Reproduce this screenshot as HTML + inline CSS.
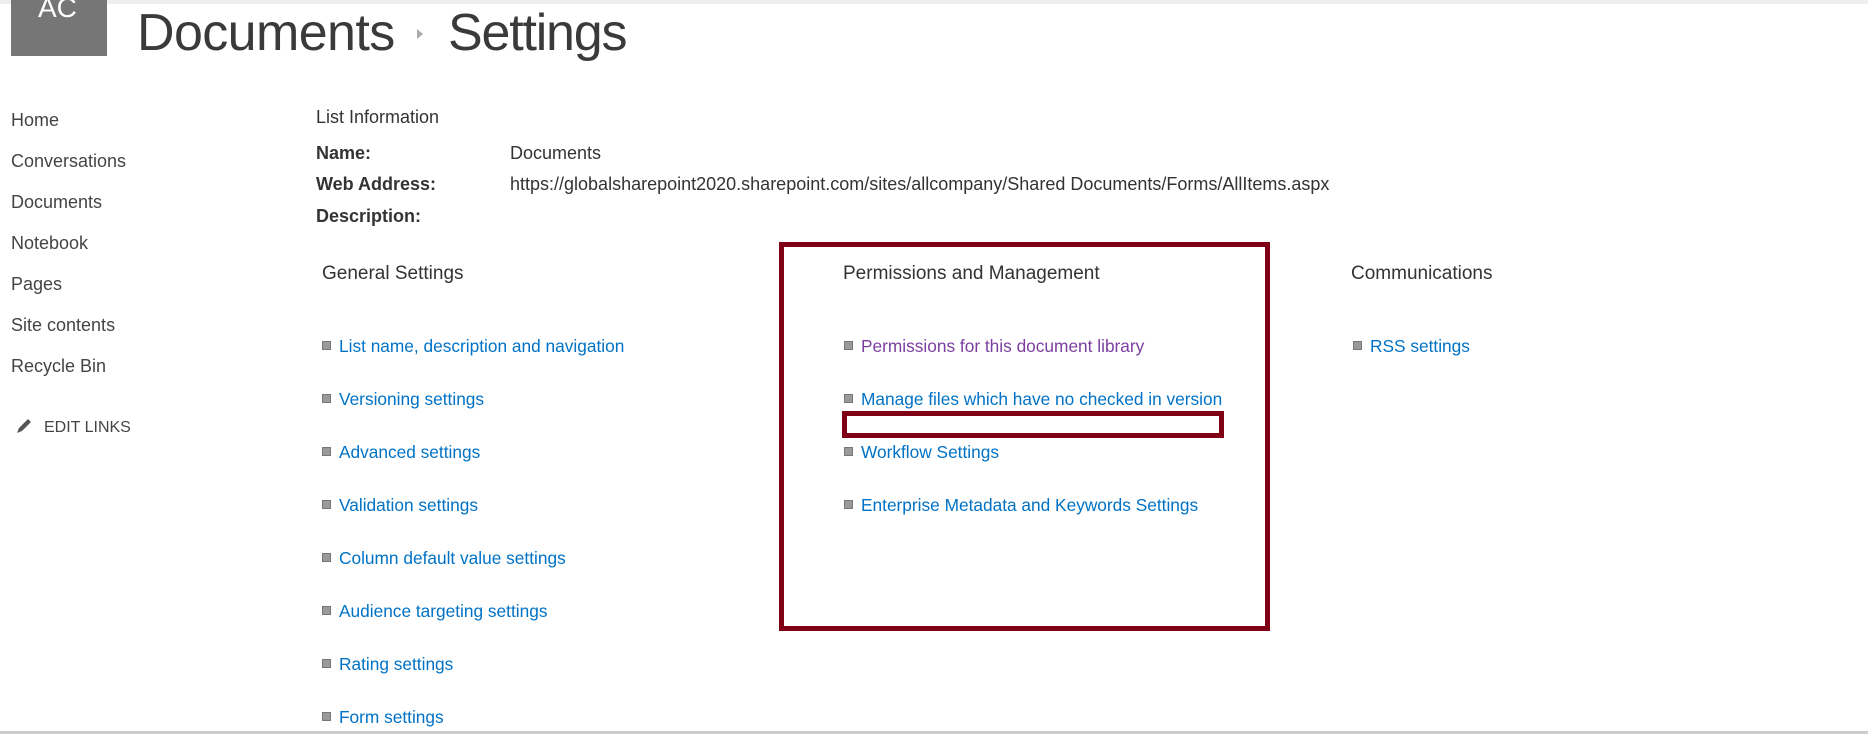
<!DOCTYPE html>
<html><head><style>
body{margin:0;width:1868px;height:734px;position:relative;background:#fff;font-family:"Liberation Sans",sans-serif;overflow:hidden}
.a{position:absolute;white-space:nowrap}
.nav{font-size:18px;color:#444;left:11px}
.lab{font-size:18px;color:#333;font-weight:bold;left:316px}
.val{font-size:18px;color:#333;left:510px}
.h{font-size:19px;color:#333}
.l{font-size:17.3px;color:#0072c6}
.b{position:absolute;width:7px;height:7px;background:#9a9a9a;border:1px solid #777}
</style></head><body>
<div class="a" style="left:0;top:0;width:1868px;height:4px;background:#eee"></div>
<div class="a" style="left:11px;top:0;width:96px;height:56px;background:#767676"></div>
<div class="a" style="left:38px;top:-8px;font-size:28px;color:#fff">AC</div>
<div class="a" style="left:137px;top:3px;font-size:52px;color:#3a3a3a;letter-spacing:-0.6px">Documents</div>
<div class="a" style="left:417px;top:29px;width:0;height:0;border-left:6px solid #aaa;border-top:5px solid transparent;border-bottom:5px solid transparent"></div>
<div class="a" style="left:448px;top:3px;font-size:52px;color:#3a3a3a;letter-spacing:-1.2px">Settings</div>

<div class="a nav" style="top:110px">Home</div>
<div class="a nav" style="top:151px">Conversations</div>
<div class="a nav" style="top:192px">Documents</div>
<div class="a nav" style="top:233px">Notebook</div>
<div class="a nav" style="top:274px">Pages</div>
<div class="a nav" style="top:315px">Site contents</div>
<div class="a nav" style="top:356px">Recycle Bin</div>
<svg class="a" style="left:14px;top:416px" width="20" height="20" viewBox="0 0 20 20"><path d="M3 17 L5 12 L14 3 L17 6 L8 15 Z" fill="#555"/></svg>
<div class="a" style="left:44px;top:419px;font-size:16px;color:#444">EDIT LINKS</div>

<div class="a" style="left:316px;top:107px;font-size:18px;color:#333">List Information</div>
<div class="a lab" style="top:143px">Name:</div>
<div class="a val" style="top:143px">Documents</div>
<div class="a lab" style="top:174px">Web Address:</div>
<div class="a val" style="top:174px">https://globalsharepoint2020.sharepoint.com/sites/allcompany/Shared Documents/Forms/AllItems.aspx</div>
<div class="a lab" style="top:206px">Description:</div>

<div class="a h" style="left:322px;top:263px">General Settings</div>
<div class="a h" style="left:843px;top:263px">Permissions and Management</div>
<div class="a h" style="left:1351px;top:263px">Communications</div>

<div class="b" style="left:322px;top:341px"></div><div class="a l" style="left:339px;top:336px">List name, description and navigation</div>
<div class="b" style="left:322px;top:394px"></div><div class="a l" style="left:339px;top:389px">Versioning settings</div>
<div class="b" style="left:322px;top:447px"></div><div class="a l" style="left:339px;top:442px">Advanced settings</div>
<div class="b" style="left:322px;top:500px"></div><div class="a l" style="left:339px;top:495px">Validation settings</div>
<div class="b" style="left:322px;top:553px"></div><div class="a l" style="left:339px;top:548px">Column default value settings</div>
<div class="b" style="left:322px;top:606px"></div><div class="a l" style="left:339px;top:601px">Audience targeting settings</div>
<div class="b" style="left:322px;top:659px"></div><div class="a l" style="left:339px;top:654px">Rating settings</div>
<div class="b" style="left:322px;top:712px"></div><div class="a l" style="left:339px;top:707px">Form settings</div>

<div class="b" style="left:844px;top:341px"></div><div class="a l" style="left:861px;top:336px;color:#7b3fa0">Permissions for this document library</div>
<div class="b" style="left:844px;top:394px"></div><div class="a l" style="left:861px;top:389px">Manage files which have no checked in version</div>
<div class="b" style="left:844px;top:447px"></div><div class="a l" style="left:861px;top:442px">Workflow Settings</div>
<div class="b" style="left:844px;top:500px"></div><div class="a l" style="left:861px;top:495px">Enterprise Metadata and Keywords Settings</div>

<div class="b" style="left:1353px;top:341px"></div><div class="a l" style="left:1370px;top:336px">RSS settings</div>

<div class="a" style="left:779px;top:242px;width:481px;height:379px;border:5px solid #800015"></div>
<div class="a" style="left:842px;top:411px;width:372px;height:17px;border:5px solid #800015"></div>
<div class="a" style="left:0;top:731px;width:1868px;height:3px;background:#ccc"></div>
</body></html>
